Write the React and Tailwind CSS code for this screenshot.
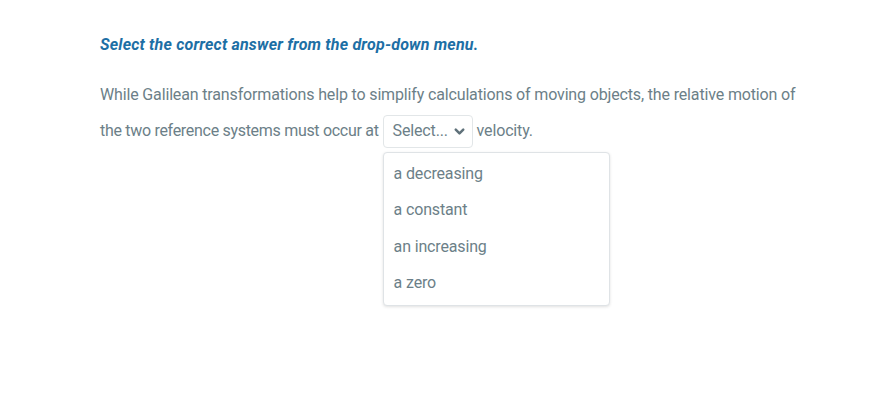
import { ChevronDown } from 'lucide-react'

const options = ['a decreasing', 'a constant', 'an increasing', 'a zero']

export default function App() {
  return (
    <div className="w-[869px] h-[419px] bg-white pl-[100px] pt-[35px] font-['Roboto',sans-serif]">
      <p className="text-[16px] font-bold italic text-[#1d6fa5] leading-[20px] tracking-[0.2px]">
        Select the correct answer from the drop-down menu.
      </p>

      <div className="mt-[22px] text-[16px] text-[#6c7f88] leading-[36px] tracking-[-0.15px]">
        <p>While Galilean transformations help to simplify calculations of moving objects, the relative motion of</p>
        <p className="flex items-center">
          <span className="tracking-[-0.3px]">the two reference systems must occur at</span>
          <span className="relative ml-[4px] mr-[4px]">
            <span className="flex items-center w-[90px] h-[33px] pl-[9px] pr-[5px] border border-[#e2e6e8] rounded-[4px] bg-white">
              <span>Select...</span>
              <ChevronDown className="ml-auto w-[15px] h-[15px] text-[#5f717a]" strokeWidth={4} />
            </span>
            <div className="absolute left-0 top-[37px] w-[227px] py-[3px] bg-white border border-[#dfe3e6] rounded-[4px] shadow-[0_1px_3px_rgba(0,0,0,0.12)]">
              {options.map((o) => (
                <div key={o} className="px-[10px] h-[36.5px] flex items-center text-[#6c7f88]">
                  {o}
                </div>
              ))}
            </div>
          </span>
          <span>velocity.</span>
        </p>
      </div>
    </div>
  )
}
